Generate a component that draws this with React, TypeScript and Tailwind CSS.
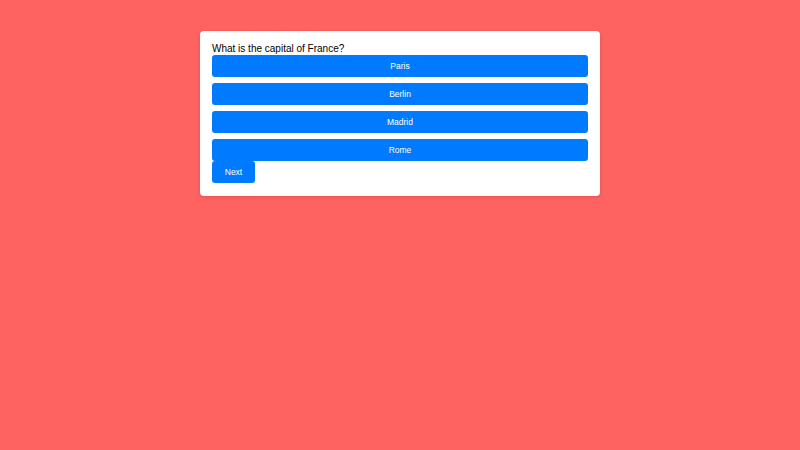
const options = ["Paris", "Berlin", "Madrid", "Rome"];

export default function App() {
  return (
    <div className="min-h-screen w-full bg-[#ff6361] pt-[31px] font-['Liberation_Sans',Arial,sans-serif]">
      <div className="mx-auto w-[400px] rounded-[4px] bg-white px-[12px] pt-[12px] pb-[13px] shadow-[0_1px_4px_rgba(0,0,0,0.15)]">
        <h2 className="h-[12px] text-[10px] leading-[12px] text-black">
          What is the capital of France?
        </h2>
        <div className="flex flex-col gap-[6px]">
          {options.map((opt) => (
            <button
              key={opt}
              className="flex h-[22px] w-full items-center justify-center rounded-[3px] bg-[#007bff] pt-px text-[8.5px] text-white"
            >
              {opt}
            </button>
          ))}
        </div>
        <button className="flex h-[22px] w-[43px] items-center justify-center rounded-[3px] bg-[#007bff] pt-px text-[8.5px] text-white">
          Next
        </button>
      </div>
    </div>
  );
}
